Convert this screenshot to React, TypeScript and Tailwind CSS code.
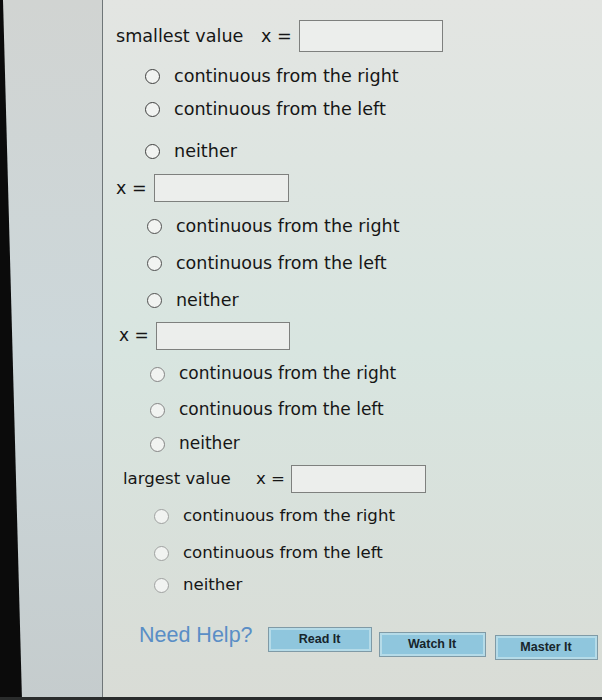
import React from "react";

const font = "font-['DejaVu_Sans',Verdana,sans-serif]";

function Radio({
  label,
  className,
  circle,
  text,
}: {
  label: string;
  className: string;
  circle: string;
  text: string;
}) {
  return (
    <div className={`flex h-[28px] items-center ${className}`}>
      <span
        className={`h-[15px] w-[15px] shrink-0 rounded-full border-[1.5px] bg-[#f1f3f1] ${circle}`}
      />
      <span className={`ml-[14px] text-[#161616] ${text}`}>{label}</span>
    </div>
  );
}

function HelpButton({ label, className }: { label: string; className: string }) {
  return (
    <button
      className={`flex h-[25px] items-center justify-center border border-[#7f9aa6] bg-[#8fc6dd] font-['Liberation_Sans',Arial,sans-serif] text-[12.5px] font-bold text-[#17252b] shadow-[inset_0_0_0_2px_#b5dbe8] ${className}`}
    >
      {label}
    </button>
  );
}

export default function App() {
  const g1 = "text-[17.6px]";
  const g2 = "text-[17.5px]";
  const g3 = "text-[17px]";
  const g4 = "text-[16.6px]";

  return (
    <div
      className={`relative flex h-[700px] w-[602px] overflow-hidden bg-linear-to-b from-[#e3e5e2] via-[#d8e5e0] to-[#d9dcd6] ${font}`}
    >
      {/* left margin of the page */}
      <div className="w-[103px] shrink-0 border-r border-[#6f7678] bg-linear-to-b from-[#d1d4d2] via-[#ccd7da] to-[#c5cccd]" />

      <div className="flex flex-1 flex-col pt-[22px]">
        {/* smallest value */}
        <div className={`ml-[13px] flex h-[28px] items-center text-[#161616] ${g1}`}>
          <span className="w-[145px]">smallest value</span>
          <span>x =</span>
          <span className="ml-[7px] h-[32px] w-[144px] border border-[#7e807e] bg-[#eceeec]" />
        </div>
        <Radio label="continuous from the right" className="ml-[42px] mt-[12px]" circle="border-[#3f3f3f]" text={g1} />
        <Radio label="continuous from the left" className="ml-[42px] mt-[5px]" circle="border-[#3f3f3f]" text={g1} />
        <Radio label="neither" className="ml-[42px] mt-[14px]" circle="border-[#3f3f3f]" text={g1} />

        {/* second point */}
        <div className={`ml-[13px] mt-[9px] flex h-[28px] items-center text-[#161616] ${g2}`}>
          <span>x =</span>
          <span className="ml-[7px] h-[28px] w-[135px] border border-[#7e807e] bg-[#eceeec]" />
        </div>
        <Radio label="continuous from the right" className="ml-[44px] mt-[10px]" circle="border-[#505050]" text={g2} />
        <Radio label="continuous from the left" className="ml-[44px] mt-[9px]" circle="border-[#505050]" text={g2} />
        <Radio label="neither" className="ml-[44px] mt-[9px]" circle="border-[#505050]" text={g2} />

        {/* third point */}
        <div className={`ml-[16px] mt-[8px] flex h-[28px] items-center text-[#161616] ${g3}`}>
          <span>x =</span>
          <span className="ml-[7px] h-[28px] w-[134px] border border-[#7e807e] bg-[#eceeec]" />
        </div>
        <Radio label="continuous from the right" className="ml-[47px] mt-[10px]" circle="border-[#858585]" text={g3} />
        <Radio label="continuous from the left" className="ml-[47px] mt-[8px]" circle="border-[#858585]" text={g3} />
        <Radio label="neither" className="ml-[47px] mt-[6px]" circle="border-[#858585]" text={g3} />

        {/* largest value */}
        <div className={`ml-[20px] mt-[7px] flex h-[28px] items-center text-[#161616] ${g4}`}>
          <span className="w-[133px]">largest value</span>
          <span>x =</span>
          <span className="ml-[6px] h-[28px] w-[135px] border border-[#7e807e] bg-[#eceeec]" />
        </div>
        <Radio label="continuous from the right" className="ml-[51px] mt-[9px]" circle="border-[#9fa1a0]" text={g4} />
        <Radio label="continuous from the left" className="ml-[51px] mt-[9px]" circle="border-[#9fa1a0]" text={g4} />
        <Radio label="neither" className="ml-[51px] mt-[4px]" circle="border-[#9fa1a0]" text={g4} />

        {/* help */}
        <div className="ml-[36px] mt-[22px] flex items-start">
          <span className="font-['Liberation_Sans',Arial,sans-serif] text-[21.5px] leading-[28px] text-[#5a8ec6]">
            Need Help?
          </span>
          <div className="ml-[15px] mt-[6px] flex items-start">
            <HelpButton label="Read It" className="w-[104px]" />
            <HelpButton label="Watch It" className="ml-[7px] mt-[5px] w-[107px]" />
            <HelpButton label="Master It" className="ml-[9px] mt-[8px] w-[103px]" />
          </div>
        </div>
      </div>

      {/* dark edges of the photographed screen */}
      <div className="absolute left-0 top-0 h-full w-[24px] bg-[#0b0b0b] [clip-path:polygon(0_0,3px_0,22px_100%,0_100%)]" />
      <div className="absolute bottom-0 left-0 h-[3px] w-full bg-[#2a2c2c]" />
    </div>
  );
}
